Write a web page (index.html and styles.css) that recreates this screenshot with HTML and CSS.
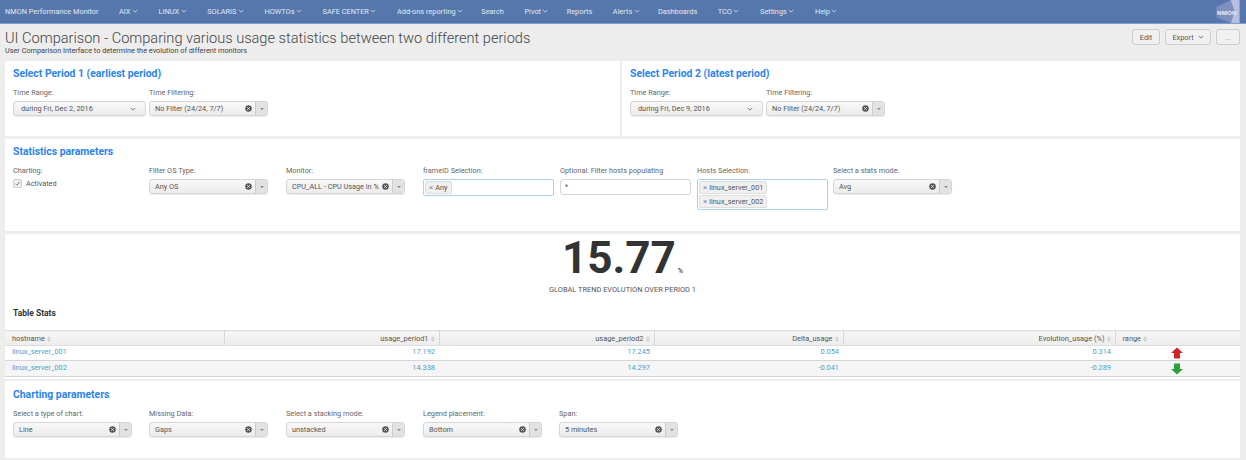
FILE: index.html
```html
<!DOCTYPE html>
<html lang="en">
<head>
<meta charset="utf-8">
<title>UI Comparison</title>
<link rel="stylesheet" href="styles.css">
</head>
<body>
<svg class="defs" width="0" height="0" aria-hidden="true">
  <symbol id="chev" viewBox="0 0 8 5"><path d="M1 1l3 3 3-3" fill="none" stroke="currentColor" stroke-width="1"/></symbol>
  <symbol id="clear" viewBox="0 0 8 8"><circle cx="4" cy="4" r="3.7" fill="#555"/><path d="M2.6 2.6l2.8 2.8M5.4 2.6L2.6 5.4" stroke="#eee" stroke-width="1.1"/></symbol>
  <symbol id="sort" viewBox="0 0 5 8"><path d="M.8 3L2.5 1l1.7 2zM.8 5l1.7 2 1.7-2z" fill="none" stroke="#aaa" stroke-width=".6"/></symbol>
</svg>
<nav class="nav">
  <span class="brand">NMON Performance Monitor</span>
  <span class="nav-item">AIX<svg class="chev"><use href="#chev"/></svg></span>
  <span class="nav-item">LINUX<svg class="chev"><use href="#chev"/></svg></span>
  <span class="nav-item">SOLARIS<svg class="chev"><use href="#chev"/></svg></span>
  <span class="nav-item">HOWTOs<svg class="chev"><use href="#chev"/></svg></span>
  <span class="nav-item">SAFE CENTER<svg class="chev"><use href="#chev"/></svg></span>
  <span class="nav-item nav-tight">Add-ons reporting<svg class="chev"><use href="#chev"/></svg></span>
  <span class="nav-item">Search</span>
  <span class="nav-item nav-tight">Pivot<svg class="chev"><use href="#chev"/></svg></span>
  <span class="nav-item">Reports</span>
  <span class="nav-item nav-tight">Alerts<svg class="chev"><use href="#chev"/></svg></span>
  <span class="nav-item">Dashboards</span>
  <span class="nav-item">TCO<svg class="chev"><use href="#chev"/></svg></span>
  <span class="nav-item">Settings<svg class="chev"><use href="#chev"/></svg></span>
  <span class="nav-item">Help<svg class="chev"><use href="#chev"/></svg></span>
  <span class="logo">
    <svg class="logo-shape" viewBox="0 0 24 24"><polygon points="0,7 15,0 24,0 24,24 15,24 0,18" fill="#7f8fc0"/><polygon points="15,0 24,0 24,24 15,24 19,12" fill="#b9bfe0"/></svg>
    <span class="logo-text">NMON</span>
  </span>
</nav>

<header class="head">
  <div>
    <h1>UI Comparison - Comparing various usage statistics between two different periods</h1>
    <p class="sub">User Comparison Interface to determine the evolution of different monitors</p>
  </div>
  <div class="actions">
    <button class="btn btn-edit">Edit</button>
    <button class="btn btn-export">Export<svg class="chev"><use href="#chev"/></svg></button>
    <button class="btn btn-more">...</button>
  </div>
</header>

<main class="dash">
  <div class="row row-periods">
    <section class="panel panel-p1">
      <h2>Select Period 1 (earliest period)</h2>
      <div class="fields">
        <div class="field w133"><label>Time Range:</label>
          <div class="picker"><span>during Fri, Dec 2, 2016</span><svg class="chev"><use href="#chev"/></svg></div></div>
        <div class="field w119"><label>Time Filtering:</label>
          <div class="select"><span class="val">No Filter (24/24, 7/7)</span><svg class="clear"><use href="#clear"/></svg><span class="drop"></span></div></div>
      </div>
    </section>
    <section class="panel panel-p2">
      <h2>Select Period 2 (latest period)</h2>
      <div class="fields">
        <div class="field w133"><label>Time Range:</label>
          <div class="picker"><span>during Fri, Dec 9, 2016</span><svg class="chev"><use href="#chev"/></svg></div></div>
        <div class="field w119"><label>Time Filtering:</label>
          <div class="select"><span class="val">No Filter (24/24, 7/7)</span><svg class="clear"><use href="#clear"/></svg><span class="drop"></span></div></div>
      </div>
    </section>
  </div>

  <section class="panel panel-stats">
    <h2>Statistics parameters</h2>
    <div class="fields">
      <div class="field w119 mr17"><label>Charting:</label>
        <div class="check"><span class="box"><svg viewBox="0 0 8 8"><path d="M1.5 4.2l1.8 1.8L6.5 2" fill="none" stroke="#555" stroke-width=".9"/></svg></span>Activated</div></div>
      <div class="field w119 mr18"><label>Filter OS Type:</label>
        <div class="select"><span class="val">Any OS</span><svg class="clear"><use href="#clear"/></svg><span class="drop"></span></div></div>
      <div class="field w119 mr18"><label>Monitor:</label>
        <div class="select"><span class="val">CPU_ALL - CPU Usage in %</span><svg class="clear"><use href="#clear"/></svg><span class="drop"></span></div></div>
      <div class="field w131 mr6"><label>frameID Selection:</label>
        <div class="multi"><span class="tag"><i>×</i>Any</span></div></div>
      <div class="field w131 mr6"><label>Optional: Filter hosts populating</label>
        <div class="text-input">*</div></div>
      <div class="field w131 mr5"><label>Hosts Selection:</label>
        <div class="multi"><span class="tag"><i>×</i>linux_server_001</span><span class="tag"><i>×</i>linux_server_002</span></div></div>
      <div class="field w119"><label>Select a stats mode:</label>
        <div class="select"><span class="val">Avg</span><svg class="clear"><use href="#clear"/></svg><span class="drop"></span></div></div>
    </div>
  </section>

  <section class="panel panel-table">
    <div class="single">
      <div class="single-line"><span class="single-num">15.77</span><span class="single-unit">%</span></div>
      <div class="single-cap">GLOBAL TREND EVOLUTION OVER PERIOD 1</div>
    </div>
    <h3>Table Stats</h3>
    <table class="stats">
      <colgroup><col class="c1"><col class="c2"><col class="c3"><col class="c4"><col class="c5"><col class="c6"></colgroup>
      <thead><tr>
        <th class="l">hostname<svg class="sort"><use href="#sort"/></svg></th>
        <th>usage_period1<svg class="sort"><use href="#sort"/></svg></th>
        <th>usage_period2<svg class="sort"><use href="#sort"/></svg></th>
        <th>Delta_usage<svg class="sort"><use href="#sort"/></svg></th>
        <th>Evolution_usage (%)<svg class="sort"><use href="#sort"/></svg></th>
        <th class="l">range<svg class="sort"><use href="#sort"/></svg></th>
      </tr></thead>
      <tbody>
        <tr>
          <td class="l">linux_server_001</td><td>17.192</td><td>17.245</td><td>0.054</td><td>0.314</td>
          <td class="arrow"><svg viewBox="0 0 12 12"><path d="M6 .5L12 6H9v5.5H3V6H0z" fill="#d3222a"/></svg></td>
        </tr>
        <tr class="alt">
          <td class="l">linux_server_002</td><td>14.338</td><td>14.297</td><td>-0.041</td><td>-0.289</td>
          <td class="arrow"><svg viewBox="0 0 12 12"><path d="M6 11.5L12 6H9V.5H3V6H0z" fill="#2f9e3a"/></svg></td>
        </tr>
      </tbody>
    </table>
  </section>

  <section class="panel panel-chart">
    <h2>Charting parameters</h2>
    <div class="fields">
      <div class="field w119 mr17"><label>Select a type of chart:</label>
        <div class="select"><span class="val">Line</span><svg class="clear"><use href="#clear"/></svg><span class="drop"></span></div></div>
      <div class="field w119 mr18"><label>Missing Data:</label>
        <div class="select"><span class="val">Gaps</span><svg class="clear"><use href="#clear"/></svg><span class="drop"></span></div></div>
      <div class="field w119 mr18"><label>Select a stacking mode:</label>
        <div class="select"><span class="val">unstacked</span><svg class="clear"><use href="#clear"/></svg><span class="drop"></span></div></div>
      <div class="field w119 mr17"><label>Legend placement:</label>
        <div class="select"><span class="val">Bottom</span><svg class="clear"><use href="#clear"/></svg><span class="drop"></span></div></div>
      <div class="field w119"><label>Span:</label>
        <div class="select"><span class="val">5 minutes</span><svg class="clear"><use href="#clear"/></svg><span class="drop"></span></div></div>
    </div>
  </section>
</main>
</body>
</html>
```

FILE: styles.css
```css
* { box-sizing: border-box; }
html, body { margin: 0; padding: 0; }
body {
  width: 1246px;
  height: 460px;
  overflow: hidden;
  background: #ededed;
  font-family: Roboto, "Liberation Sans", sans-serif;
  font-size: 7.3px;
  color: #555;
}
.defs { position: absolute; }

/* nav */
.nav {
  display: flex;
  align-items: center;
  height: 24px;
  padding: 0 6px 1px 5px;
  background: #5577ab;
  border-bottom: 1px solid #7f9fcf;
  color: #e3e9f3;
  font-size: 7.35px;
  white-space: nowrap;
}
.brand { margin-right: 21px; width: 93px; }
.nav-item { display: flex; align-items: center; margin-right: 20.6px; }
.nav-item.nav-tight { margin-right: 18.2px; }
.chev { width: 6px; height: 4px; margin-left: 1.5px; color: currentColor; }
.logo { position: relative; margin-left: auto; width: 24px; height: 23px; }
.logo-shape { position: absolute; inset: 0; width: 24px; height: 23px; }
.logo-text { position: absolute; left: 1px; top: 9px; font: bold 6.2px/7px "Liberation Sans", sans-serif; color: #eef0f8; letter-spacing: .2px; }

/* head */
.head {
  display: flex;
  justify-content: space-between;
  height: 37px;
  padding: 5px 6px 0 5px;
}
h1 {
  margin: 0;
  font-size: 14.6px;
  line-height: 18px;
  font-weight: 300;
  color: #444;
}
.sub { margin: 0; font-size: 7.3px; line-height: 8px; color: #444; }
.actions { display: flex; gap: 5px; height: 16px; }
.btn {
  display: flex;
  align-items: center;
  justify-content: center;
  height: 16px;
  padding: 0;
  border: 1px solid #ccc;
  border-radius: 3px;
  background: #f0f0f0;
  color: #555;
  font: 7.3px Roboto, sans-serif;
}
.btn-edit { width: 28px; }
.btn-export { width: 46px; }
.btn-export .chev { margin-left: 4px; }
.btn-more { width: 24px; color: #999; }

/* panels */
.dash { display: flex; flex-direction: column; gap: 3px; padding: 0 6px 0 5px; }
.row-periods { display: flex; gap: 2px; }
.panel { background: #fff; padding: 7px 8px 0; }
.panel-p1 { width: 615px; height: 75px; }
.panel-p2 { width: 618px; height: 75px; }
.panel-stats { height: 92px; }
.panel-table { height: 145px; padding: 0; }
.panel-chart { height: 77px; margin-top: -1px; padding-top: 8px; }
h2 {
  margin: 0;
  font-size: 10.4px;
  line-height: 11px;
  font-weight: 700;
  color: #2a84f0;
}
.fields { display: flex; align-items: flex-start; margin-top: 10px; }
.row-periods .fields { gap: 3px; }
.field label { display: block; height: 8px; line-height: 8px; margin-bottom: 4px; color: #666; font-size: 7.3px; white-space: nowrap; }
.w119 { width: 119px; flex: none; }
.w131 { width: 131px; flex: none; }
.w133 { width: 133px; flex: none; }
.mr18 { margin-right: 18px; }
.mr17 { margin-right: 17px; }
.mr6 { margin-right: 6px; }
.mr5 { margin-right: 5px; }

.picker, .select {
  display: flex;
  align-items: center;
  height: 15px;
  border: 1px solid #d5d5d5;
  border-radius: 3px;
  background: linear-gradient(#f8f8f8, #ececec);
  box-shadow: 0 1px 1px rgba(0,0,0,.08);
  color: #555;
  white-space: nowrap;
}
.picker { justify-content: space-between; padding: 0 9px 0 7px; }
.select { padding-left: 5px; }
.val { flex: 1; overflow: hidden; }
.clear { width: 7px; height: 7px; flex: none; margin-right: 3px; }
.drop {
  position: relative;
  flex: none;
  align-self: stretch;
  width: 12px;
  border-left: 1px solid #ccc;
  border-radius: 0 2px 2px 0;
  background: #e2e2e2;
}
.drop::after {
  content: "";
  position: absolute;
  left: 4px;
  top: 6px;
  border: 2px solid transparent;
  border-top: 2px solid #888;
}

.check { display: flex; align-items: center; gap: 4px; color: #555; margin-top: 2px; }
.box { width: 9px; height: 9px; border: 1px solid #ccc; border-radius: 2px; background: #f2f2f2; display: block; }
.box svg { display: block; width: 7px; height: 7px; }

.multi {
  display: flex;
  flex-direction: column;
  align-items: flex-start;
  gap: 1px;
  min-height: 17px;
  padding: 1px;
  border: 1px solid #a7d2f3;
  border-radius: 2px;
  background: #fff;
}
.tag {
  display: flex;
  align-items: center;
  height: 13px;
  padding: 0 3px;
  border: 1px solid #ddd;
  border-radius: 2px;
  background: #f0f0f0;
  color: #555;
}
.tag i { font-style: normal; color: #888; margin-right: 2px; font-size: 8px; }
.text-input { height: 16px; padding: 2px 4px; border: 1px solid #d5d5d5; border-radius: 3px; background: #fff; color: #555; }

/* single value */
.single { height: 69px; display: flex; flex-direction: column; align-items: center; }
.single-line { display: flex; align-items: flex-end; height: 47px; }
.single-num { font-size: 44px; line-height: 50px; font-weight: 700; color: #333; margin-bottom: -2px; }
.single-unit { font-size: 7px; font-weight: 700; color: #555; margin-left: 2px; margin-bottom: 6px; line-height: 8px; }
.single-cap { margin-top: 5px; font-size: 7.4px; line-height: 8px; color: #555; }
h3 { margin: 6px 0 0 8px; font-size: 8.5px; line-height: 9px; font-weight: 700; color: #333; }

/* table */
.stats { width: 100%; margin-top: 12px; border-collapse: collapse; table-layout: fixed; font-size: 7.4px; }
.c1 { width: 219px; } .c2 { width: 215px; } .c3 { width: 215px; } .c4 { width: 189px; } .c5 { width: 272px; } .c6 { width: 125px; }
.stats th {
  height: 15px;
  padding: 0 4px;
  text-align: right;
  font-weight: 400;
  color: #555;
  background: linear-gradient(#f6f6f6, #ececec);
  border-top: 1px solid #ddd;
  border-bottom: 1px solid #ddd;
  border-right: 1px solid #d8d8d8;
}
.stats th:last-child { border-right: 0; }
.stats th.l { text-align: left; padding-left: 7px; }
.sort { width: 4px; height: 6px; margin-left: 2px; vertical-align: -1px; }
.stats td {
  padding: 0 4px 4px;
  height: 15px;
  text-align: right;
  color: #4a9fd0;
  border-bottom: 1px solid #d5d5d5;
}
.stats td.l { text-align: left; padding-left: 7px; }
.stats tr.alt td { background: #f5f5f5; height: 16px; padding-bottom: 3px; }
.stats td.arrow { padding: 0 0 0 56px; text-align: left; }
.stats tr.alt td.arrow { padding: 1px 0 0 56px; }
.arrow svg { display: block; width: 12px; height: 12px; }
```
